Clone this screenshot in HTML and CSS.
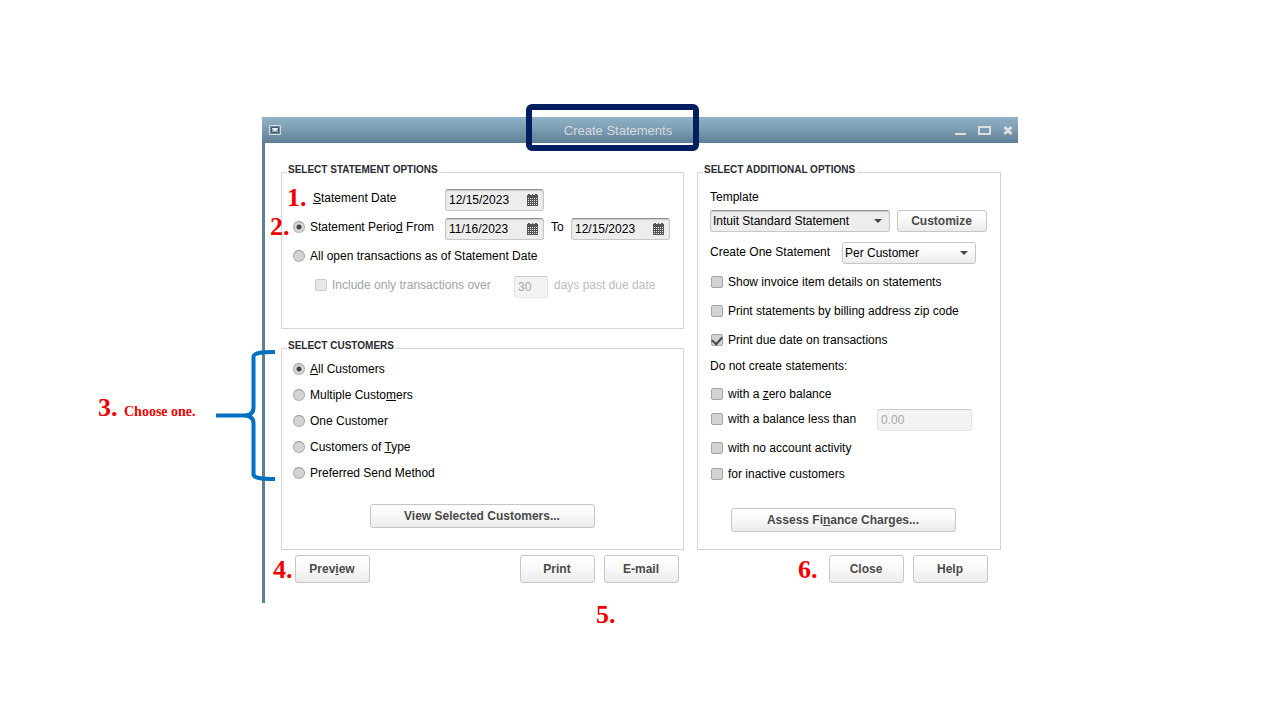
FILE: index.html
```html
<!DOCTYPE html>
<html lang="en">
<head>
<meta charset="utf-8">
<meta name="viewport" content="width=device-width, initial-scale=1">
<title>Create Statements</title>
<link rel="stylesheet" href="styles.css">
</head>
<body>
<svg class="defs" aria-hidden="true">
  <symbol id="calendar" viewBox="0 0 11 12">
    <path fill="#555" d="M0 1h1V0h2v1h2V0h1v1h2V0h2v1h1v11H0z"/>
    <path stroke="#e4e4e4" stroke-dasharray="1 1" d="M1 4.500h9M1 6.500h9M1 8.500h9M1 10.500h9"/>
  </symbol>
</svg>
<main class="dialog">
  <header class="titlebar">
    <button class="tool menu" aria-label="Window menu">
      <svg width="12" height="10" viewBox="0 0 12 10"><path fill="#6a8aa2" stroke="#d6dade" d="M.5.5h11v9H.5z"/><path fill="#8fa9bd" stroke="#3f5670" d="M2.500 2.500h7v5h-7z"/><path fill="#f2f2f2" d="M3 3h6L6 6.500z"/></svg>
    </button>
    <h1 class="title">Create Statements</h1>
    <div class="controls">
      <button class="tool" aria-label="Minimize"><svg width="11" height="10" viewBox="0 0 11 10"><path fill="#dedede" d="M0 7h11v2H0z"/></svg></button>
      <button class="tool" aria-label="Maximize"><svg width="13" height="10" viewBox="0 0 13 10"><path fill="none" stroke="#dedede" stroke-width="2" d="M1 1h11v7H1z"/></svg></button>
      <button class="tool" aria-label="Close window"><svg width="10" height="10" viewBox="0 0 10 10"><path fill="none" stroke="#dedede" stroke-width="3" d="M1.500 1l7 7M8.500 1l-7 7"/></svg></button>
    </div>
  </header>

  <form class="content">
    <fieldset class="group">
      <legend>SELECT STATEMENT OPTIONS</legend>
      <div class="row">
        <label class="lead indent" for="sdate"><span><u>S</u>tatement Date</span></label>
        <span class="date"><input id="sdate" type="text" value="12/15/2023"><button type="button" class="tool" aria-label="Pick statement date"><svg width="11" height="12"><use href="#calendar"/></svg></button></span>
      </div>
      <div class="row">
        <label class="lead"><input type="radio" name="period" checked><span>Statement Perio<u>d</u> From</span></label>
        <span class="date"><input type="text" value="11/16/2023" aria-label="Period from"><button type="button" class="tool" aria-label="Pick start date"><svg width="11" height="12"><use href="#calendar"/></svg></button></span>
        <label class="to" for="to">To</label>
        <span class="date"><input id="to" type="text" value="12/15/2023"><button type="button" class="tool" aria-label="Pick end date"><svg width="11" height="12"><use href="#calendar"/></svg></button></span>
      </div>
      <div class="row">
        <label><input type="radio" name="period"><span>All open transactions as of Statement Date</span></label>
      </div>
      <div class="row past-due">
        <label class="muted over"><input type="checkbox" disabled><span>Include only transactions over</span></label>
        <input id="days" class="field days" type="text" value="30" disabled>
        <label class="muted lighter" for="days">days past due date</label>
      </div>
    </fieldset>

    <fieldset class="group additional">
      <legend>SELECT ADDITIONAL OPTIONS</legend>
      <label class="caption" for="template">Template</label>
      <div class="row tight">
        <span class="select template"><select id="template"><option>Intuit Standard Statement</option></select></span>
        <button type="button" class="btn customize">Customize</button>
      </div>
      <div class="row tight per">
        <label class="one" for="per">Create One Statement</label>
        <span class="select raised"><select id="per"><option>Per Customer</option></select></span>
      </div>
      <div class="row"><label><input type="checkbox"><span>Show invoice item details on statements</span></label></div>
      <div class="row"><label><input type="checkbox"><span>Print statements by billing address zip code</span></label></div>
      <div class="row"><label><input type="checkbox" checked><span>Print due date on transactions</span></label></div>
      <p class="note">Do not create statements:</p>
      <div class="row short"><label><input type="checkbox"><span>with a <u>z</u>ero balance</span></label></div>
      <div class="row short">
        <label class="less"><input type="checkbox"><span>with a balance less than</span></label>
        <input class="field amount" type="text" value="0.00" aria-label="Minimum balance" disabled>
      </div>
      <div class="row short spaced"><label><input type="checkbox"><span>with no account activity</span></label></div>
      <div class="row short"><label><input type="checkbox"><span>for inactive customers</span></label></div>
      <button type="button" class="btn wide assess"><span>Assess Fi<u>n</u>ance Charges...</span></button>
    </fieldset>

    <fieldset class="group customers">
      <legend>SELECT CUSTOMERS</legend>
      <div class="row short"><label><input type="radio" name="who" checked><span><u>A</u>ll Customers</span></label></div>
      <div class="row short"><label><input type="radio" name="who"><span>Multiple Custo<u>m</u>ers</span></label></div>
      <div class="row short"><label><input type="radio" name="who"><span>One Customer</span></label></div>
      <div class="row short"><label><input type="radio" name="who"><span>Customers of <u>T</u>ype</span></label></div>
      <div class="row short"><label><input type="radio" name="who"><span>Preferred Send Method</span></label></div>
      <button type="button" class="btn wide">View Selected Customers...</button>
    </fieldset>

    <div class="actions send">
      <button type="button" class="btn tall first"><span>Prev<u>i</u>ew</span></button>
      <button type="button" class="btn tall">Print</button>
      <button type="button" class="btn tall">E-mail</button>
    </div>
    <div class="actions finish">
      <button type="button" class="btn tall">Close</button>
      <button type="button" class="btn tall">Help</button>
    </div>
  </form>

  <div class="highlight"></div>
  <span class="step step-1">1.</span>
  <span class="step step-2">2.</span>
  <span class="step step-3">3. <small>Choose one.</small></span>
  <span class="step step-4">4.</span>
  <span class="step step-5">5.</span>
  <span class="step step-6">6.</span>
  <svg class="bracket" width="60" height="132" viewBox="0 0 60 132" fill="none" stroke="#0070c0" stroke-width="4">
    <path d="M59 2C44 2 37.500 3 37.500 7V58C37.500 63 34 65.500 27 65.500H0M59 129C44 129 37.500 128 37.500 124V73C37.500 68 34 65.500 27 65.500"/>
  </svg>
</main>
</body>
</html>
```
FILE: styles.css
```css
* { box-sizing: border-box; }

body {
  display: flow-root;
  min-height: 100vh;
  margin: 0;
  background: #fff;
  color: #000;
  font: 12px/20px "Liberation Sans", Arial, sans-serif;
}

input, select, button { font: inherit; color: inherit; margin: 0; }

.defs { position: absolute; width: 0; height: 0; }

.dialog {
  position: relative;
  margin: 117px 262px 0;
  border-left: 3px solid #5f7f93;
}

.titlebar {
  display: flex;
  align-items: center;
  height: 26px;
  margin-left: -3px;
  padding: 2px 5px 0 7px;
  background: linear-gradient(#91b1c8, #7b9bb0 50%, #5e7e96);
}

.title {
  flex: 1;
  margin: 0;
  font-size: 13px;
  font-weight: normal;
  text-align: center;
  color: #d3dae0;
}

.controls { display: flex; gap: 12px; }

.tool { display: flex; padding: 0; border: 0; background: none; }
.menu { padding-bottom: 3px; }

.content {
  display: grid;
  grid-template-columns: 403fr 304fr;
  gap: 10px 13px;
  padding: 20px 17px 20px 16px;
}

.group {
  min-width: 0;
  margin: 0;
  padding: 4px 11px 27px;
  border: 1px solid #d4d4d8;
}

.customers { padding: 0 11px 21px; }

.additional {
  grid-column: 2;
  grid-row: 1 / span 2;
  padding: 6px 12px 0;
}

legend {
  margin-left: -6px;
  padding: 1px 2px 5px 1px;
  font-size: 10px;
  font-weight: bold;
  line-height: 12px;
  color: #2b2b33;
}

.additional legend { margin-left: -7px; }

.row { display: flex; align-items: center; height: 29px; }
.row.short { height: 26px; }
.row.tight { height: 28px; }
.row.per { margin-top: 4px; }
.row.spaced { margin-top: 2px; }

label { display: flex; align-items: center; gap: 5px; white-space: nowrap; }
.row label { padding-bottom: 3px; }
.customers .row label { padding-bottom: 2px; }
.additional .row label { padding-bottom: 0; }
.additional .row .one, .additional .row .less { padding-bottom: 2px; }

.lead { width: 152px; }
.indent { padding-left: 20px; }
.to { width: 27px; padding-left: 7px; }
.past-due { padding-left: 22px; }
.over { width: 199px; }
.one { width: 132px; }
.less { width: 167px; }
.muted { color: #a0a4a6; }
.lighter { padding-left: 6px; color: #bdbdbd; }

input[type="radio"], input[type="checkbox"] {
  appearance: none;
  flex: none;
  width: 12px;
  height: 12px;
  border: 1px solid #a5a5a5;
  background: #d3d3d3;
}

input[type="radio"] {
  border-radius: 50%;
  border-color: #8f8f8f #aaa #b4b4b4;
}

input[type="radio"]:checked {
  background: radial-gradient(circle, #444 0 2px, #d6d6d6 3px);
}

input[type="checkbox"] { border-radius: 2px; }
input[type="checkbox"]:disabled { border-color: #ccc; background: #e8e8e8; }
.additional input[type="checkbox"] { margin-left: 1px; }

input[type="checkbox"]:checked { display: grid; place-items: start center; }

input[type="checkbox"]:checked::before {
  content: "";
  width: 8px;
  height: 5px;
  margin-top: 1px;
  border: solid #444;
  border-width: 0 0 2px 2px;
  transform: rotate(-48deg);
}

.date, .field, .select {
  display: flex;
  align-items: center;
  height: 22px;
  border: 1px solid #c6c6c6;
  border-top-color: #8d9591;
  border-radius: 3px;
  background: #ededed;
  box-shadow: inset 0 1px 1px #c8c8c8;
}

.date { width: 99px; padding: 0 5px 0 3px; }

.date input {
  flex: 1;
  min-width: 0;
  padding: 0;
  border: 0;
  background: none;
}

.field { padding: 0 3px; border-color: #c9c9c9 #e2e2e2 #e8e8e8; background: #f3f3f3; color: #aaa; box-shadow: none; }
.days { width: 34px; }
.amount { width: 95px; }

.select { position: relative; }
.template { width: 180px; }

.select select {
  appearance: none;
  width: 100%;
  height: 20px;
  padding: 0 20px 0 2px;
  border: 0;
  background: none;
}

.select::after {
  content: "";
  position: absolute;
  right: 7px;
  top: 8px;
  border: 4px solid transparent;
  border-top-color: #444;
  border-bottom: 0;
  pointer-events: none;
}

.raised { width: 134px; }

.btn, .raised {
  border: 1px solid #c3c8c4;
  border-radius: 3px;
  background: linear-gradient(#fff, #fafafa 40%, #ebebeb);
  box-shadow: none;
}

.btn { padding: 0 1px 0 0; font-weight: bold; color: #4a4a4a; white-space: nowrap; }
.customize { width: 90px; height: 22px; margin-left: 7px; }
.wide { display: block; width: 225px; height: 24px; margin: 17px auto 0; line-height: 20px; }
.assess { margin: 21px auto 0 21px; }
.tall { width: 75px; height: 28px; }

.caption { display: block; }
.note { margin: 0 0 3px; line-height: 24px; }

.actions { display: flex; gap: 9px; margin-top: -5px; }
.send { padding: 0 5px 0 14px; }
.first { margin-right: auto; }
.finish { justify-content: flex-end; padding-right: 13px; }

/* Tutorial annotations laid over the dialog */
.highlight {
  position: absolute;
  left: 261px;
  top: -13px;
  width: 173px;
  height: 47px;
  border: 6px solid #001f60;
  border-radius: 6px;
}

.step {
  position: absolute;
  font: bold 26px/26px "Liberation Serif", "Times New Roman", serif;
  color: #f00000;
  white-space: nowrap;
}

.step small { font-size: 14px; }
.step-1 { left: 22px; top: 68px; }
.step-2 { left: 5px; top: 97px; }
.step-3 { left: -167px; top: 278px; }
.step-4 { left: 8px; top: 440px; }
.step-5 { left: 331px; top: 485px; }
.step-6 { left: 533px; top: 440px; }

.bracket { position: absolute; left: -49px; top: 233px; }
```
